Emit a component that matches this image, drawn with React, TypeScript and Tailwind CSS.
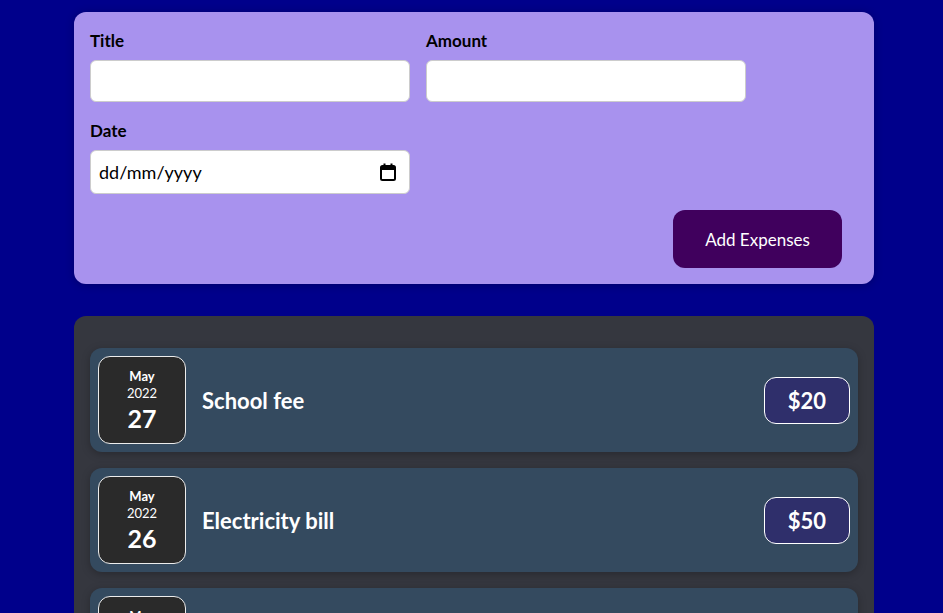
import React from 'react';

type Expense = { id: string; title: string; amount: number; month: string; year: string; day: string };

const expenses: Expense[] = [
  { id: 'e1', title: 'School fee', amount: 20, month: 'May', year: '2022', day: '27' },
  { id: 'e2', title: 'Electricity bill', amount: 50, month: 'May', year: '2022', day: '26' },
  { id: 'e3', title: 'Groceries', amount: 35, month: 'May', year: '2022', day: '25' },
];

const CalendarIcon = () => (
  <svg width="18" height="20" viewBox="0 0 18 20" className="text-black">
    <rect x="2" y="4" width="14" height="14" rx="1.5" fill="none" stroke="currentColor" strokeWidth="2" />
    <rect x="2" y="4" width="14" height="4" fill="currentColor" />
    <rect x="4.5" y="1.5" width="2" height="3.5" fill="currentColor" />
    <rect x="11.5" y="1.5" width="2" height="3.5" fill="currentColor" />
  </svg>
);

const ExpenseDate = ({ e }: { e: Expense }) => (
  <div className="flex h-[88px] w-[88px] shrink-0 flex-col items-center justify-center rounded-xl border border-[#ececec] bg-[#2a2a2a] text-white">
    <div className="text-[13px] font-bold leading-[17px]">{e.month}</div>
    <div className="text-[13px] leading-[17px]">{e.year}</div>
    <div className="mt-px text-[25px] font-bold leading-[30px]">{e.day}</div>
  </div>
);

const ExpenseItem = ({ e }: { e: Expense }) => (
  <div className="flex items-center rounded-xl bg-[#344a5f] p-2 shadow-[0_2px_8px_rgba(0,0,0,0.25)]">
    <ExpenseDate e={e} />
    <div className="flex flex-1 items-center justify-between">
      <h2 className="ml-4 text-[22px] font-bold text-white">{e.title}</h2>
      <div className="flex h-[47px] w-[86px] items-center justify-center rounded-xl border border-white bg-[#2f2f6b] text-[22px] font-bold text-white">
        ${e.amount}
      </div>
    </div>
  </div>
);

export default function App() {
  return (
    <div
      className="min-h-screen bg-[#00008b] pt-3"
      style={{ fontFamily: 'Lato, "Noto Sans", sans-serif' }}
    >
      <div className="ml-[74px] w-[800px] rounded-xl bg-[#a892ee] p-4 shadow-[0_1px_8px_rgba(0,0,0,0.25)]">
        <div className="flex flex-wrap gap-x-4 gap-y-4">
          <div className="flex flex-col">
            <label className="mb-[6px] text-[17px] font-bold leading-[26px] text-black">Title</label>
            <div className="h-[42px] w-[320px] rounded-md border border-[#ccc] bg-white" />
          </div>
          <div className="flex flex-col">
            <label className="mb-[6px] text-[17px] font-bold leading-[26px] text-black">Amount</label>
            <div className="h-[42px] w-[320px] rounded-md border border-[#ccc] bg-white" />
          </div>
          <div className="flex flex-col">
            <label className="mb-[6px] text-[17px] font-bold leading-[26px] text-black">Date</label>
            <div className="flex h-[44px] w-[320px] items-center justify-between rounded-md border border-[#ccc] bg-white pl-2 pr-3 text-[18px] text-black">
              <span>dd/mm/yyyy</span>
              <CalendarIcon />
            </div>
          </div>
        </div>
        <div className="mt-4 flex justify-end">
          <button className="mr-4 h-[58px] w-[169px] rounded-xl bg-[#40005d] pt-px text-[17px] text-white">
            Add Expenses
          </button>
        </div>
      </div>

      <div className="ml-[74px] mt-8 w-[800px] rounded-xl bg-[#35373f] px-4 pb-4 pt-8">
        <div className="flex flex-col gap-4">
          {expenses.map((e) => (
            <ExpenseItem key={e.id} e={e} />
          ))}
        </div>
      </div>
    </div>
  );
}
